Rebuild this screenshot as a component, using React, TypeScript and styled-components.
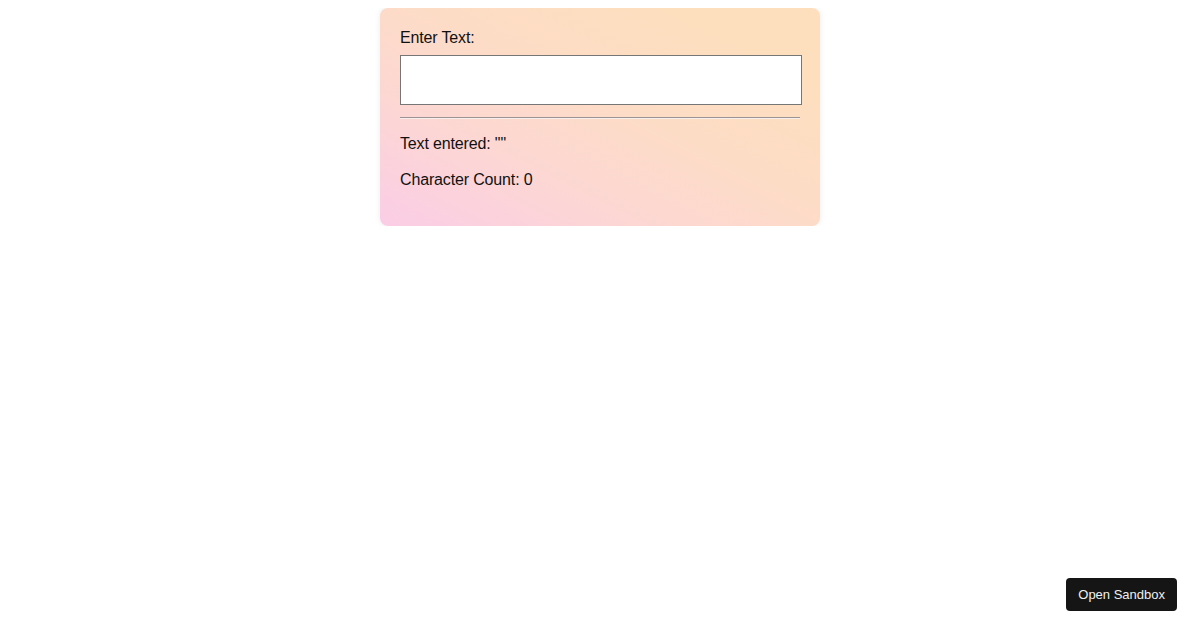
import React, { useState } from "react";
import styled, { createGlobalStyle } from "styled-components";

const GlobalStyle = createGlobalStyle`
  body {
    margin: 8px;
    font-family: "Liberation Sans", Arial, sans-serif;
    background: #fff;
  }
`;

const Card = styled.main`
  width: 440px;
  margin: 0 auto;
  box-sizing: border-box;
  padding: 21px 18px 19px 20px;
  border-radius: 8px;
  background: linear-gradient(to top right, #fbcde6 0%, #fcd7d3 30%, #fddcc6 55%, #fddfbd 85%);
  box-shadow: 0 0 6px rgba(0, 0, 0, 0.08);
`;

const Label = styled.label`
  display: block;
  font-size: 16px;
  line-height: 18px;
  letter-spacing: -0.15px;
  color: #111;
  margin-bottom: 8px;
`;

const TextInput = styled.input`
  display: block;
  width: 100%;
  height: 50px;
  box-sizing: border-box;
  border: 1px solid #767676;
  background: #fff;
  padding: 0 8px;
  font-size: 16px;
  font-family: inherit;
`;

const Divider = styled.hr`
  margin: 12px 2px 0 0;
  border: none;
  border-top: 1px solid #9c9494;
  border-bottom: 1px solid #f6efec;
`;

const Info = styled.p`
  margin: 16px 0 0;
  font-size: 16px;
  line-height: 18px;
  letter-spacing: -0.15px;
  color: #111;

  & + & {
    margin-top: 18px;
  }
`;

const Spacer = styled.div`
  height: 18px;
`;

const SandboxButton = styled.button`
  position: fixed;
  right: 23px;
  bottom: 19px;
  height: 33px;
  padding: 0 12px;
  border: none;
  border-radius: 4px;
  background: #151515;
  color: #f0f0f0;
  font-family: "Liberation Sans", Arial, sans-serif;
  font-size: 13px;
`;

export default function App() {
  const [text, setText] = useState("");

  return (
    <>
      <GlobalStyle />
      <Card>
        <Label htmlFor="text">Enter Text:</Label>
        <TextInput id="text" value={text} onChange={e => setText(e.target.value)} />
        <Divider />
        <Info>Text entered: "{text}"</Info>
        <Info>Character Count: {text.length}</Info>
        <Spacer />
      </Card>
      <SandboxButton>Open Sandbox</SandboxButton>
    </>
  );
}
